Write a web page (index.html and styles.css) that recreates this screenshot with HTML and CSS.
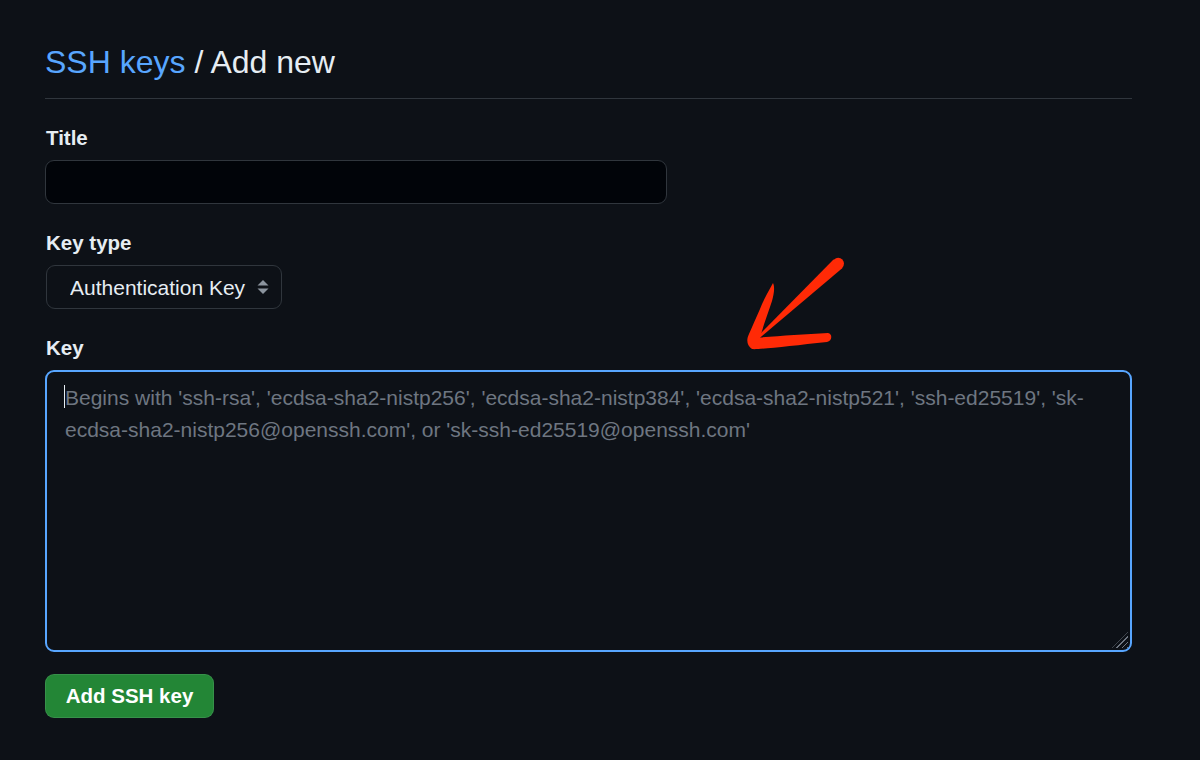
FILE: index.html
```html
<!DOCTYPE html>
<html lang="en">
<head>
<meta charset="utf-8">
<title>SSH keys / Add new</title>
<link rel="stylesheet" href="styles.css">
</head>
<body>
<main class="page">
  <div class="subhead">
    <h2 class="subhead-heading"><a href="#" class="crumb-link">SSH keys</a> / Add new</h2>
  </div>
  <form class="key-form">
    <div class="form-group">
      <label class="form-label" for="title">Title</label>
      <input id="title" class="form-control title-input" type="text">
    </div>
    <div class="form-group">
      <label class="form-label" for="keytype">Key type</label>
      <div class="select-wrap">
        <select id="keytype" class="form-select">
          <option>Authentication Key</option>
          <option>Signing Key</option>
        </select>
        <svg class="select-arrows" width="12" height="16" viewBox="0 0 12 16" aria-hidden="true">
          <path d="M6 1 L11.5 6.5 L0.5 6.5 Z" fill="#8b949e"/>
          <path d="M6 15 L11.5 9.5 L0.5 9.5 Z" fill="#8b949e"/>
        </svg>
      </div>
    </div>
    <div class="form-group">
      <label class="form-label" for="key">Key</label>
      <div class="textarea-wrap">
        <textarea id="key" class="form-control key-input" placeholder="Begins with 'ssh-rsa', 'ecdsa-sha2-nistp256', 'ecdsa-sha2-nistp384', 'ecdsa-sha2-nistp521', 'ssh-ed25519', 'sk-ecdsa-sha2-nistp256@openssh.com', or 'sk-ssh-ed25519@openssh.com'"></textarea>
        <span class="caret"></span>
        <span class="resizer"></span>
      </div>
    </div>
    <button type="button" class="btn-primary">Add SSH key</button>
  </form>
  <svg class="annotation" width="1200" height="760" viewBox="0 0 1200 760" aria-hidden="true">
    <path fill="#ff2a06" d="M833.5 259.5 L756.5 337.5 L758.5 339 L842.5 268 Z"/>
    <circle cx="838.2" cy="263.6" r="5.8" fill="#ff2a06"/>
    <path fill="#ff2a06" d="M773 283 C768 292 763 301 760 309 C756 318 752 327 749 334 C746 340 747 346 752 349 C756 350 790 346 827 342 C832 341 833 334 828 333 C805 334 780 336 760 337.5 C763 327 768 313 772 301 C774 294 775 287 773 283 Z"/>
  </svg>
</main>
</body>
</html>
```

FILE: styles.css
```css
* {
  box-sizing: border-box;
}

html, body {
  margin: 0;
  padding: 0;
  background: #0d1117;
}

body {
  font-family: "Liberation Sans", Arial, Helvetica, sans-serif;
  color: #e6edf3;
  width: 1200px;
  height: 760px;
  overflow: hidden;
}

.page {
  position: relative;
  width: 1200px;
  height: 760px;
  padding: 0 68px 0 45px;
}

.subhead {
  padding-top: 42px;
  padding-bottom: 16px;
  border-bottom: 1px solid #30363d;
}

.subhead-heading {
  margin: 0;
  font-size: 32px;
  line-height: 40px;
  font-weight: 400;
  color: #e6edf3;
}

.crumb-link {
  color: #58a6ff;
  text-decoration: none;
}

.key-form {
  padding-top: 23px;
  display: flex;
  flex-direction: column;
  align-items: flex-start;
}

.form-group {
  display: flex;
  flex-direction: column;
  align-items: stretch;
  margin-bottom: 23px;
  width: 100%;
}

.form-group:nth-child(3) {
  margin-bottom: 22px;
}

.form-label {
  display: block;
  font-size: 20.5px;
  line-height: 31px;
  font-weight: 700;
  color: #e6edf3;
  margin: 0 0 7px 1px;
}

.form-control {
  font-family: inherit;
  font-size: 21px;
  color: #e6edf3;
  background: #010409;
  border: 1px solid #30363d;
  border-radius: 9px;
  outline: none;
}

.title-input {
  width: 622px;
  height: 44px;
  padding: 0 18px;
}

.select-wrap {
  position: relative;
  width: 236px;
  margin-left: 1px;
}

.form-select {
  appearance: none;
  -webkit-appearance: none;
  width: 236px;
  height: 44px;
  padding: 0 20px 0 23px;
  font-family: inherit;
  font-size: 21px;
  color: #e6edf3;
  background: #0d1117;
  border: 1px solid #30363d;
  border-radius: 9px;
  outline: none;
}

.select-arrows {
  position: absolute;
  left: 211px;
  top: 14px;
  pointer-events: none;
}

.textarea-wrap {
  position: relative;
  width: 1087px;
  height: 282px;
}

.key-input {
  display: block;
  width: 1087px;
  height: 282px;
  padding: 10px 18px;
  line-height: 31.5px;
  background: #0d1117;
  border: 2px solid #58a6ff;
  resize: none;
}

.key-input::placeholder {
  color: #6e7681;
  opacity: 1;
}

.caret {
  position: absolute;
  left: 19px;
  top: 15px;
  width: 1px;
  height: 23px;
  background: #e6edf3;
}

.resizer {
  position: absolute;
  right: 4px;
  bottom: 4px;
  width: 16px;
  height: 16px;
  clip-path: polygon(100% 0, 100% 100%, 0 100%);
  background: repeating-linear-gradient(135deg, transparent 0 2.6px, #6e7681 2.6px 3.8px);
}

.btn-primary {
  width: 169px;
  height: 44px;
  padding: 0;
  font-family: inherit;
  font-size: 20.5px;
  font-weight: 700;
  color: #ffffff;
  background: #238636;
  border: 1px solid rgba(240, 246, 252, 0.1);
  border-radius: 9px;
  cursor: pointer;
}

.annotation {
  position: absolute;
  left: 0;
  top: 0;
  pointer-events: none;
}
```
